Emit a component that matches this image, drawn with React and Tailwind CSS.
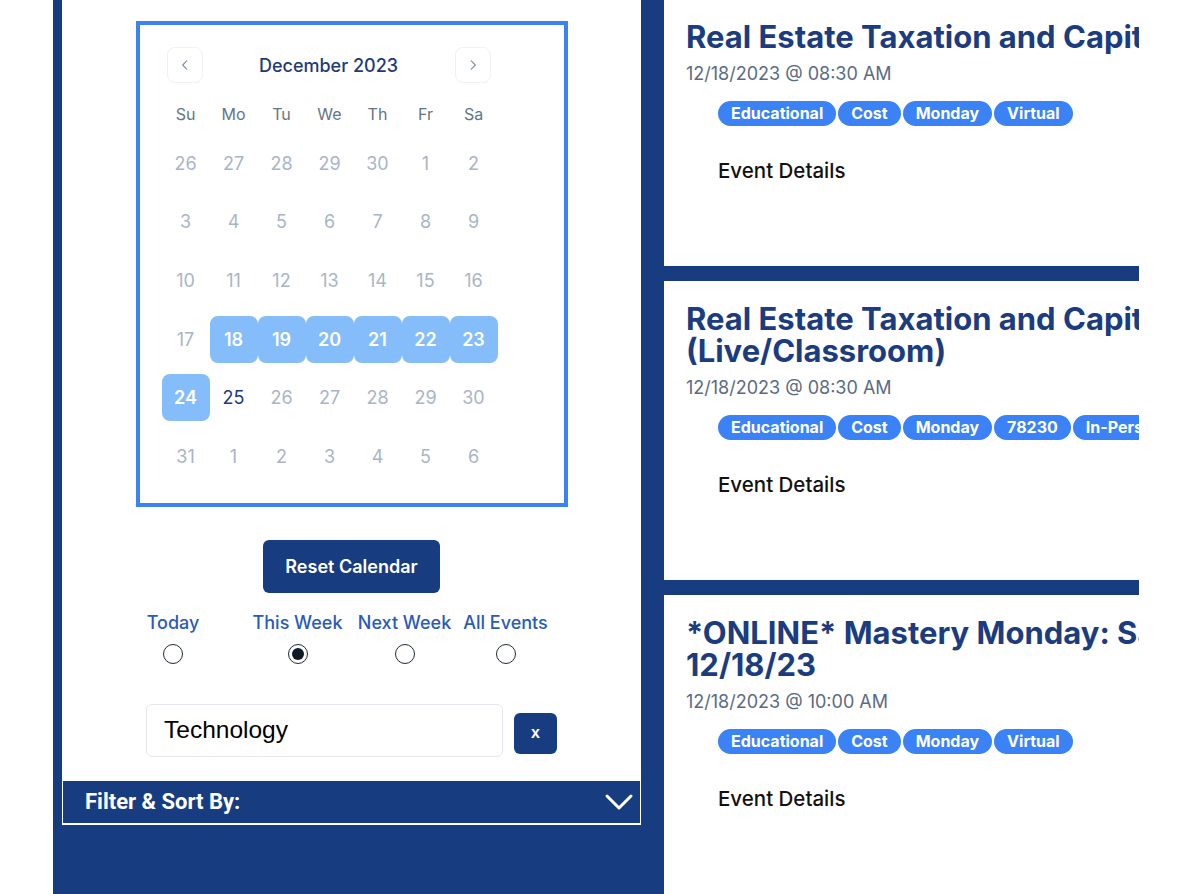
import React, { useState } from 'react';

const BLUE = 'bg-[#183c80]';

const weekdays = ['Su', 'Mo', 'Tu', 'We', 'Th', 'Fr', 'Sa'];

// December 2023 grid, with the spill-over days of Nov / Jan
const weeks = [
  [26, 27, 28, 29, 30, 1, 2],
  [3, 4, 5, 6, 7, 8, 9],
  [10, 11, 12, 13, 14, 15, 16],
  [17, 18, 19, 20, 21, 22, 23],
  [24, 25, 26, 27, 28, 29, 30],
  [31, 1, 2, 3, 4, 5, 6],
];

const events = [
  {
    id: 1,
    title: 'Real Estate Taxation and Capital Gains',
    date: '12/18/2023 @ 08:30 AM',
    tags: ['Educational', 'Cost', 'Monday', 'Virtual'],
  },
  {
    id: 2,
    title: 'Real Estate Taxation and Capital Gains (Live/Classroom)',
    date: '12/18/2023 @ 08:30 AM',
    tags: ['Educational', 'Cost', 'Monday', '78230', 'In-Person'],
  },
  {
    id: 3,
    title: '*ONLINE* Mastery Monday: Sales 12/18/23',
    date: '12/18/2023 @ 10:00 AM',
    tags: ['Educational', 'Cost', 'Monday', 'Virtual'],
  },
];

const Calendar = () => {
  const isSelected = (wi, di) => (wi === 3 && di > 0) || (wi === 4 && di === 0);

  return (
    <div className="w-[432px] border-4 border-[#3b82f6] bg-white pt-[22px] pb-[17px] pl-[22px]">
      <div className="w-[336px] flex items-center justify-between pl-[5px] pr-[7px]">
        <button className="w-9 h-9 rounded-lg border border-[#eef1f6] flex items-center justify-center text-[#7f90ab]">
          <svg width="14" height="14" viewBox="0 0 24 24" fill="none" stroke="currentColor" strokeWidth="2" strokeLinecap="round" strokeLinejoin="round">
            <polyline points="15 5 8 12 15 19" />
          </svg>
        </button>
        <span className="text-[18px] font-medium text-[#1e3a7a]">December 2023</span>
        <button className="w-9 h-9 rounded-lg border border-[#eef1f6] flex items-center justify-center text-[#7f90ab]">
          <svg width="14" height="14" viewBox="0 0 24 24" fill="none" stroke="currentColor" strokeWidth="2" strokeLinecap="round" strokeLinejoin="round">
            <polyline points="9 5 16 12 9 19" />
          </svg>
        </button>
      </div>

      <div className="w-[336px] mt-[11px] grid grid-cols-7 h-10 items-center text-center text-[16px] text-[#64748b]">
        {weekdays.map(d => (
          <span key={d}>{d}</span>
        ))}
      </div>

      <div className="w-[336px]">
        {weeks.map((week, wi) => (
          <div key={wi} className="grid grid-cols-7 h-[58.6px] items-center">
            {week.map((day, di) => {
              const selected = isSelected(wi, di);
              const today = wi === 4 && di === 1;
              return (
                <div
                  key={di}
                  className={
                    selected
                      ? 'h-[47px] rounded-lg bg-[#85bdfb] text-white font-semibold flex items-center justify-center text-[18px]'
                      : today
                      ? 'h-[47px] flex items-center justify-center text-[18px] text-[#1e3a7a]'
                      : 'h-[47px] flex items-center justify-center text-[18px] text-[#a9b5c7]'
                  }
                >
                  {day}
                </div>
              );
            })}
          </div>
        ))}
      </div>
    </div>
  );
};

const RangeOptions = () => {
  const [range, setRange] = useState('week');
  const options = [
    { key: 'today', label: 'Today', cls: 'w-[52px]' },
    { key: 'week', label: 'This Week', cls: 'w-[91px] ml-[53px]' },
    { key: 'next', label: 'Next Week', cls: 'w-[95px] ml-[14px]' },
    { key: 'all', label: 'All Events', cls: 'w-[87px] ml-[10px]' },
  ];

  return (
    <div className="self-start ml-[85px] mt-[18px] flex">
      {options.map(opt => (
        <label key={opt.key} className={`${opt.cls} flex flex-col items-center cursor-pointer`} onClick={() => setRange(opt.key)}>
          <span className="text-[18px] leading-6 font-medium text-[#2a5bb7] whitespace-nowrap">{opt.label}</span>
          <span className="mt-[9px] w-5 h-5 rounded-full border border-[#1f2937] flex items-center justify-center">
            {range === opt.key && <span className="w-3 h-3 rounded-full bg-[#111827]"></span>}
          </span>
        </label>
      ))}
    </div>
  );
};

const EventCard = ({ event }) => (
  <div className="bg-white pt-[22px] pb-[81px] pl-[22px]">
    <div className="w-[600px]">
      <h2 className="text-[31px] leading-[32px] font-bold text-[#1b3c7e]">{event.title}</h2>
      <p className="mt-[7px] text-[18px] leading-[28px] text-[#5a6b84]">{event.date}</p>
      <div className="mt-[13px] ml-[32px] flex gap-[2px] whitespace-nowrap">
        {event.tags.map(tag => (
          <span key={tag} className="h-[25px] px-[13px] rounded-full bg-[#3b82f6] text-white text-[16px] font-bold leading-[25px]">
            {tag}
          </span>
        ))}
      </div>
      <p className="mt-[31px] ml-[32px] text-[20.5px] leading-[28px] font-medium text-[#111111]">Event Details</p>
    </div>
  </div>
);

export default function App() {
  const [search, setSearch] = useState('Technology');

  return (
    <div className="min-h-screen bg-white" style={{ fontFamily: 'Inter, "Noto Sans", sans-serif' }}>
      <div className={`ml-[53px] w-[1086px] h-[894px] overflow-hidden ${BLUE} pl-[9px] flex items-start gap-[23px]`}>
        {/* Left column: calendar & filters */}
        <div className="w-[579px] bg-white flex flex-col items-center pt-[21px]">
          <Calendar />

          <button className={`mt-[33px] h-[53px] w-[177px] rounded-md ${BLUE} text-white text-[18px] font-semibold`}>
            Reset Calendar
          </button>

          <RangeOptions />

          <div className="mt-[40px] flex items-start gap-[11px]">
            <input
              type="text"
              value={search}
              onChange={e => setSearch(e.target.value)}
              className="w-[357px] h-[53px] rounded-md border border-[#e5e7ef] px-[17px] text-[24.5px] text-black outline-none"
              style={{ fontFamily: '"Liberation Sans", Arial, sans-serif' }}
            />
            <button
              onClick={() => setSearch('')}
              className={`mt-[9px] w-[43px] h-[41px] rounded-md ${BLUE} text-white text-[16px] font-bold`}
              style={{ fontFamily: '"Liberation Sans", Arial, sans-serif' }}
            >
              x
            </button>
          </div>

          <div className={`self-stretch mt-[24px] mx-px mb-[2px] h-[42px] ${BLUE} flex items-center justify-between pl-[22px] pr-[6px]`}>
            <span className="text-white text-[22px] font-bold" style={{ fontFamily: 'Roboto, sans-serif' }}>
              Filter &amp; Sort By:
            </span>
            <svg width="30" height="18" viewBox="0 0 30 18" fill="none" stroke="white" strokeWidth="3" strokeLinecap="round" strokeLinejoin="round">
              <polyline points="3 3 15 15 27 3" />
            </svg>
          </div>
        </div>

        {/* Right column: events list */}
        <div className="w-[475px] -mt-px overflow-hidden flex flex-col gap-[15px]">
          {events.map(event => (
            <EventCard key={event.id} event={event} />
          ))}
        </div>
      </div>
    </div>
  );
}
